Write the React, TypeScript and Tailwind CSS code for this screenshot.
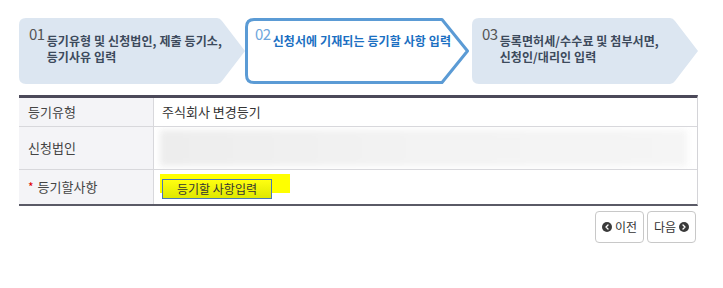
import { ChevronLeft, ChevronRight } from "lucide-react";

const font = { fontFamily: '"Noto Sans CJK KR", "Noto Sans", sans-serif' };

type Step = {
  num: string;
  lines: string[];
  active?: boolean;
};

const steps: Step[] = [
  { num: "01", lines: ["등기유형 및 신청법인, 제출 등기소,", "등기사유 입력"] },
  { num: "02", lines: ["신청서에 기재되는 등기할 사항 입력"], active: true },
  { num: "03", lines: ["등록면허세/수수료 및 첨부서면,", "신청인/대리인 입력"] },
];

function StepShape({ active }: { active?: boolean }) {
  if (active) {
    return (
      <svg className="absolute inset-0" width="226" height="66" viewBox="0 0 226 66">
        <path
          d="M9 1.5 H197 L222.5 33 L197 64.5 H9 Q1.5 64.5 1.5 57 V9 Q1.5 1.5 9 1.5 Z"
          fill="#ffffff"
          stroke="#5b9bd5"
          strokeWidth="3"
          strokeLinejoin="round"
        />
      </svg>
    );
  }
  return (
    <svg className="absolute inset-0" width="226" height="66" viewBox="0 0 226 66">
      <path
        d="M7 0 H198 Q201 0 203 3 L226 33 L203 63 Q201 66 198 66 H7 Q0 66 0 59 V7 Q0 0 7 0 Z"
        fill="#dce6f1"
      />
    </svg>
  );
}

export default function App() {
  return (
    <div className="w-[723px] h-[288px] bg-white" style={font}>
      <div className="flex pl-[19px] pt-[18px]">
        {steps.map((s, i) => (
          <div key={s.num} className={`relative w-[226px] h-[66px] ${i === 2 ? "ml-[1px]" : ""}`}>
            <StepShape active={s.active} />
            <div className="relative flex pl-[10px] pt-[6px]">
              <span
                className={`text-[15px] leading-[20px] tracking-[-0.5px] ${s.active ? "text-[#6ea6dc]" : "text-[#555555]"}`}
              >
                {s.num}
              </span>
              <div
                className={`ml-[2px] mt-[9px] text-[12px] leading-[16px] font-bold tracking-[0.1px] ${
                  s.active ? "text-[#1a6fc2]" : "text-[#3c4a5c]"
                }`}
              >
                {s.lines.map((l) => (
                  <div key={l} className="whitespace-nowrap">
                    {l}
                  </div>
                ))}
              </div>
            </div>
          </div>
        ))}
      </div>

      <div className="ml-[19px] mt-[11px] w-[679px] border-t-[3px] border-t-[#4b4959] border-b-2 border-b-[#5a5a66] border-r border-r-[#d4d4d8]">
        <div className="flex h-[29px] border-b border-[#d8d8dc]">
          <div className="w-[135px] shrink-0 bg-[#f4f4f7] border-r border-[#d8d8dc] pl-[9px] flex items-center text-[13px] text-[#444]">
            등기유형
          </div>
          <div className="pl-[8px] flex items-center text-[13px] text-[#333]">주식회사 변경등기</div>
        </div>
        <div className="flex h-[43px] border-b border-[#d8d8dc]">
          <div className="w-[135px] shrink-0 bg-[#f4f4f7] border-r border-[#d8d8dc] pl-[9px] flex items-center text-[13px] text-[#444]">
            신청법인
          </div>
          <div className="flex-1 py-[3px] pl-[6px] pr-[10px] overflow-hidden">
            <div className="h-full w-full bg-gradient-to-r from-[#ededed] via-[#f3f3f3] to-[#f5f5f5] blur-[3px]" />
          </div>
        </div>
        <div className="flex h-[34px]">
          <div className="w-[135px] shrink-0 bg-[#f4f4f7] border-r border-[#d8d8dc] pl-[9px] flex items-center text-[13px] text-[#444]">
            <span className="text-[#e00000] mr-[4px] text-[12px]">*</span>
            등기할사항
          </div>
          <div className="flex items-center pl-[8px]">
            <div className="relative">
              <span className="absolute left-[-2px] top-[-1px] h-[19px] w-[130px] bg-[#ffff00]" />
              <button className="relative h-[20px] w-[110px] border border-[#4a78b5] bg-gradient-to-b from-[#ffff10] to-[#dfe800] text-[12px] text-[#333] leading-none">
                등기할 사항입력
              </button>
            </div>
          </div>
        </div>
      </div>

      <div className="flex justify-end gap-[3px] mt-[5px] w-[696px]">
        <button className="h-[32px] w-[49px] border border-[#c8c8c8] rounded-[4px] bg-white flex items-center justify-center gap-[3px] text-[12px] text-[#333]">
          <span className="w-[10px] h-[10px] rounded-full bg-[#3a3a3a] flex items-center justify-center">
            <ChevronLeft className="w-[8px] h-[8px] text-white" strokeWidth={4} />
          </span>
          이전
        </button>
        <button className="h-[32px] w-[49px] border border-[#c8c8c8] rounded-[4px] bg-white flex items-center justify-center gap-[3px] text-[12px] text-[#333]">
          다음
          <span className="w-[10px] h-[10px] rounded-full bg-[#3a3a3a] flex items-center justify-center">
            <ChevronRight className="w-[8px] h-[8px] text-white" strokeWidth={4} />
          </span>
        </button>
      </div>
    </div>
  );
}
